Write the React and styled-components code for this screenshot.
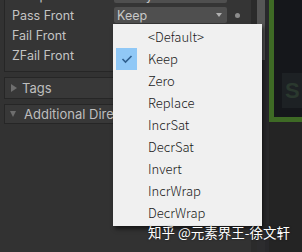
import React from 'react';
import styled, { createGlobalStyle } from 'styled-components';

const GlobalStyle = createGlobalStyle`
  html, body {
    margin: 0;
    padding: 0;
    background: #323232;
  }
`;

const options = ['<Default>', 'Keep', 'Zero', 'Replace', 'IncrSat', 'DecrSat', 'Invert', 'IncrWrap', 'DecrWrap'];

const rows = [
  { label: 'Comparison', value: 'Always', dot: false },
  { label: 'Pass Front', value: 'Keep', dot: true },
  { label: 'Fail Front', value: 'Keep', dot: true },
  { label: 'ZFail Front', value: 'Keep', dot: true },
];

const App = () => {
  return (
    <>
      <GlobalStyle />
      <Screen>
        <Inspector>
          <GroupBox>
            {rows.map((row) => (
              <PropRow key={row.label}>
                <Label>{row.label}</Label>
                <Field>
                  <span>{row.value}</span>
                  <Arrow />
                </Field>
                {row.dot && <Dot />}
              </PropRow>
            ))}
          </GroupBox>
          <Foldout>
            <Triangle />
            <FoldoutTitle>Tags</FoldoutTitle>
          </Foldout>
          <Foldout open>
            <Triangle open />
            <FoldoutTitle open>Additional Directives</FoldoutTitle>
          </Foldout>
        </Inspector>
        <Gutter />
        <ScrollTrack>
          <ScrollThumb />
        </ScrollTrack>
        <Divider />
        <ScenePanel>
          <GreenFrame>
            <NodeBox>S</NodeBox>
          </GreenFrame>
        </ScenePanel>

        <Popup>
          {options.map((opt) => (
            <MenuItem key={opt}>
              {opt === 'Keep' && (
                <CheckBox>
                  <svg width="12" height="10" viewBox="0 0 12 10">
                    <path d="M1.5 5 L4.5 8 L10.5 2" fill="none" stroke="#2f5f8e" strokeWidth="1.6" />
                  </svg>
                </CheckBox>
              )}
              {opt}
            </MenuItem>
          ))}
        </Popup>

        <Watermark>知乎 @元素界王-徐文轩</Watermark>
      </Screen>
    </>
  );
};

const Screen = styled.div`
  position: relative;
  width: 302px;
  height: 252px;
  overflow: hidden;
  display: flex;
  background: #323232;
  font-family: Inter, "Noto Sans", sans-serif;
`;

const Inspector = styled.div`
  width: 251px;
  flex-shrink: 0;
  display: flex;
  flex-direction: column;
  gap: 5px;
  padding-left: 4px;
  box-sizing: border-box;
`;

const GroupBox = styled.div`
  margin-top: -15px;
  padding-bottom: 6px;
  border-left: 1px solid #262626;
  border-bottom: 1px solid #262626;
  background: #353535;
`;

const PropRow = styled.div`
  height: 20px;
  display: flex;
  align-items: center;
  position: relative;
`;

const Label = styled.div`
  width: 109px;
  padding-left: 7px;
  box-sizing: border-box;
  font-size: 12.5px;
  color: #c4c4c4;
`;

const Field = styled.div`
  width: 113px;
  height: 16px;
  box-sizing: border-box;
  padding: 0 5px 0 3px;
  display: flex;
  align-items: center;
  justify-content: space-between;
  background: #4f4f4f;
  border-radius: 2px;
  font-size: 12.5px;
  color: #c8c8c8;
`;

const Arrow = styled.div`
  width: 0;
  height: 0;
  border-left: 3.5px solid transparent;
  border-right: 3.5px solid transparent;
  border-top: 4px solid #b0b0b0;
`;

const Dot = styled.div`
  width: 5px;
  height: 5px;
  border-radius: 50%;
  background: #8c8c8c;
  margin-left: 8px;
`;

const Foldout = styled.div`
  height: ${(p) => (p.open ? 18 : 20)}px;
  display: flex;
  align-items: center;
  background: #383838;
  border: 1px solid #262626;
  border-right: none;
`;

const Triangle = styled.div`
  width: 0;
  height: 0;
  margin-left: ${(p) => (p.open ? 5 : 6)}px;
  ${(p) =>
    p.open
      ? `border-left: 3.5px solid transparent;
         border-right: 3.5px solid transparent;
         border-top: 6px solid #6e6e6e;`
      : `border-top: 4px solid transparent;
         border-bottom: 4px solid transparent;
         border-left: 6px solid #6e6e6e;`}
`;

const FoldoutTitle = styled.div`
  margin-left: ${(p) => (p.open ? 8 : 5)}px;
  font-size: 13px;
  color: #bebebe;
  white-space: nowrap;
`;

const Gutter = styled.div`
  width: 6px;
  flex-shrink: 0;
  background: #2b2b2b;
`;

const ScrollTrack = styled.div`
  width: 8px;
  flex-shrink: 0;
  background: #2c2c2e;
`;

const ScrollThumb = styled.div`
  height: 60px;
  background: #565656;
`;

const Divider = styled.div`
  width: 4px;
  flex-shrink: 0;
  background: #28282b;
`;

const ScenePanel = styled.div`
  flex: 1;
  background: #242424;
`;

const GreenFrame = styled.div`
  height: 122px;
  box-sizing: border-box;
  border-left: 5px solid #3e6a25;
  border-bottom: 5px solid #3e6a25;
  background: #15171b;
  padding-top: 73px;
  padding-left: 8px;
`;

const NodeBox = styled.div`
  height: 35px;
  background: #1d2124;
  color: #2a382e;
  font-family: "Liberation Sans", sans-serif;
  font-weight: bold;
  font-size: 22px;
  line-height: 35px;
  padding-left: 3px;
`;

const Popup = styled.div`
  position: absolute;
  left: 113px;
  top: 24px;
  width: 149px;
  height: 202px;
  box-sizing: border-box;
  padding-top: 2px;
  background: #f0f0f0;
  box-shadow: 2px 3px 4px rgba(0, 0, 0, 0.55);
`;

const MenuItem = styled.div`
  position: relative;
  height: 22px;
  line-height: 22px;
  padding-left: 35px;
  font-family: "Noto Sans CJK SC", "Noto Sans", sans-serif;
  font-weight: 300;
  font-size: 13px;
  color: #1a1a1a;
`;

const CheckBox = styled.div`
  position: absolute;
  left: 3px;
  top: 0;
  width: 21px;
  height: 22px;
  background: #90c8f6;
  display: flex;
  align-items: center;
  justify-content: center;
`;

const Watermark = styled.div`
  position: absolute;
  left: 148px;
  top: 222px;
  font-family: "Noto Sans CJK SC", sans-serif;
  font-size: 13.5px;
  color: #ffffff;
  text-shadow: 0 0 2px rgba(0, 0, 0, 0.6);
  white-space: nowrap;
`;

export default App;
